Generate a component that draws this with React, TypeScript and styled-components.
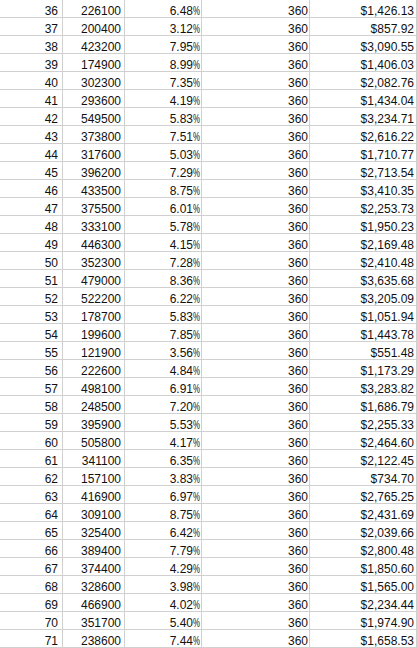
import styled, { createGlobalStyle } from "styled-components";

// Loan rows: [row, amount, rate, term, payment]
const rows: [number, string, string, string, string][] = [
  [36, "226100", "6.48", "360", "$1,426.13"],
  [37, "200400", "3.12", "360", "$857.92"],
  [38, "423200", "7.95", "360", "$3,090.55"],
  [39, "174900", "8.99", "360", "$1,406.03"],
  [40, "302300", "7.35", "360", "$2,082.76"],
  [41, "293600", "4.19", "360", "$1,434.04"],
  [42, "549500", "5.83", "360", "$3,234.71"],
  [43, "373800", "7.51", "360", "$2,616.22"],
  [44, "317600", "5.03", "360", "$1,710.77"],
  [45, "396200", "7.29", "360", "$2,713.54"],
  [46, "433500", "8.75", "360", "$3,410.35"],
  [47, "375500", "6.01", "360", "$2,253.73"],
  [48, "333100", "5.78", "360", "$1,950.23"],
  [49, "446300", "4.15", "360", "$2,169.48"],
  [50, "352300", "7.28", "360", "$2,410.48"],
  [51, "479000", "8.36", "360", "$3,635.68"],
  [52, "522200", "6.22", "360", "$3,205.09"],
  [53, "178700", "5.83", "360", "$1,051.94"],
  [54, "199600", "7.85", "360", "$1,443.78"],
  [55, "121900", "3.56", "360", "$551.48"],
  [56, "222600", "4.84", "360", "$1,173.29"],
  [57, "498100", "6.91", "360", "$3,283.82"],
  [58, "248500", "7.20", "360", "$1,686.79"],
  [59, "395900", "5.53", "360", "$2,255.33"],
  [60, "505800", "4.17", "360", "$2,464.60"],
  [61, "341100", "6.35", "360", "$2,122.45"],
  [62, "157100", "3.83", "360", "$734.70"],
  [63, "416900", "6.97", "360", "$2,765.25"],
  [64, "309100", "8.75", "360", "$2,431.69"],
  [65, "325400", "6.42", "360", "$2,039.66"],
  [66, "389400", "7.79", "360", "$2,800.48"],
  [67, "374400", "4.29", "360", "$1,850.60"],
  [68, "328600", "3.98", "360", "$1,565.00"],
  [69, "466900", "4.02", "360", "$2,234.44"],
  [70, "351700", "5.40", "360", "$1,974.90"],
  [71, "238600", "7.44", "360", "$1,658.53"],
];

function App() {
  return (
    <>
      <GlobalStyle />
      <Sheet>
        {rows.map(([num, amount, rate, term, payment]) => (
          <Row key={num}>
            <Cell pad={4}>{num}</Cell>
            <Cell pad={3}>{amount}</Cell>
            <Cell pad={1}>
              {rate}
              <Pct>%</Pct>
            </Cell>
            <Cell pad={1}>{term}</Cell>
            <Cell pad={2}>{payment}</Cell>
          </Row>
        ))}
      </Sheet>
    </>
  );
}

const GlobalStyle = createGlobalStyle`
  html, body {
    margin: 0;
    padding: 0;
    background: #fff;
  }
  body {
    font-family: "Liberation Sans", Arial, sans-serif;
    overflow: hidden;
  }
`;

const Sheet = styled.div`
  width: 417px;
  height: 648px;
  display: flex;
  flex-direction: column;
  overflow: hidden;
`;

const Row = styled.div`
  display: grid;
  grid-template-columns: 63px 62px 77px 108px 107px;
  height: 18px;
  flex: 0 0 18px;
`;

// Spreadsheet cell: right aligned, text sits at the bottom
const Cell = styled.div<{ pad: number }>`
  display: flex;
  align-items: flex-end;
  justify-content: flex-end;
  border-right: 1px solid #d0d0d0;
  border-bottom: 1px solid #d0d0d0;
  padding-right: ${(p) => p.pad}px;
  font-size: 12px;
  line-height: 12px;
  color: #111;
  white-space: nowrap;
  overflow: hidden;
`;

// narrow percent glyph as seen in the sheet
const Pct = styled.span`
  display: inline-block;
  width: 7px;
  transform: scaleX(0.65);
  transform-origin: left bottom;
`;

export default App;
